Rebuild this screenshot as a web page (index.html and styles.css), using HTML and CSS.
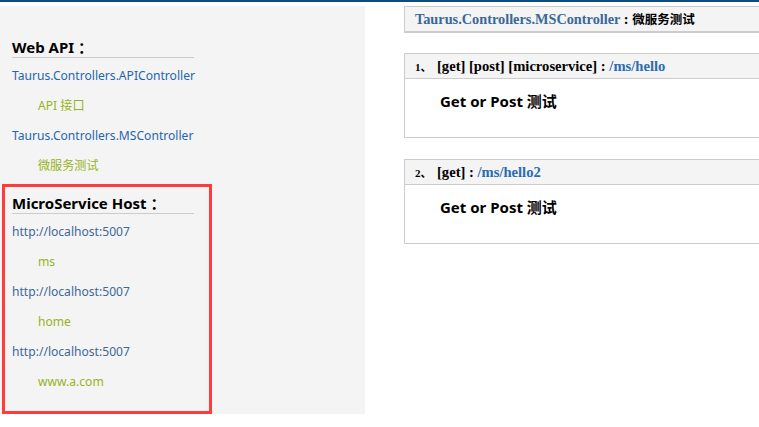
FILE: index.html
```html
<!DOCTYPE html>
<html lang="zh">
<head>
<meta charset="utf-8">
<title>Taurus MicroService</title>
<link rel="stylesheet" href="styles.css">
</head>
<body>
<div class="topbar"></div>
<div class="page">
  <aside class="sidebar">
    <section class="group">
      <h3 class="group-title">Web API ：</h3>
      <div class="row"><a class="link">Taurus.Controllers.APIController</a></div>
      <div class="row sub">API 接口</div>
      <div class="row"><a class="link">Taurus.Controllers.MSController</a></div>
      <div class="row sub">微服务测试</div>
    </section>
    <section class="group group-host">
      <h3 class="group-title">MicroService Host ：</h3>
      <div class="row"><a class="link host">http://localhost:5007</a></div>
      <div class="row sub">ms</div>
      <div class="row"><a class="link host">http://localhost:5007</a></div>
      <div class="row sub">home</div>
      <div class="row"><a class="link host">http://localhost:5007</a></div>
      <div class="row sub">www.a.com</div>
    </section>
  </aside>
  <main class="content">
    <div class="ctrl-head"><span class="ctrl-name">Taurus.Controllers.MSController</span> : <span class="cjk">微服务测试</span></div>
    <div class="api">
      <div class="api-head"><span class="num">1、</span>[get] [post] [microservice] : <span class="path">/ms/hello</span></div>
      <div class="api-body">Get or Post 测试</div>
    </div>
    <div class="api">
      <div class="api-head"><span class="num">2、</span>[get] : <span class="path">/ms/hello2</span></div>
      <div class="api-body">Get or Post 测试</div>
    </div>
  </main>
</div>
</body>
</html>
```
FILE: styles.css
```css
html, body {
  margin: 0;
  padding: 0;
  background: #ffffff;
  overflow: hidden;
}
body {
  width: 759px;
  height: 427px;
  font-family: "Noto Sans", "Noto Sans CJK SC", sans-serif;
}
.topbar {
  height: 2px;
  background: #0e4c7c;
}
.page {
  display: flex;
  align-items: flex-start;
  padding-top: 4px;
}
.sidebar {
  width: 365px;
  height: 408px;
  flex-shrink: 0;
  background: #f4f4f4;
  padding: 31px 0 0 2px;
  box-sizing: border-box;
}
.group {
  padding-left: 10px;
  width: 182px;
}
.group-title {
  margin: 0;
  width: 182px;
  height: 20px;
  line-height: 20px;
  font-size: 15px;
  font-weight: bold;
  color: #000;
  border-bottom: 1px solid #cccccc;
  margin-bottom: 3px;
  white-space: nowrap;
}
.row {
  height: 30px;
  line-height: 30px;
  font-size: 12.1px;
  white-space: nowrap;
}
.link {
  color: #1f66ad;
}
.link.host {
  color: #3d6897;
}
.sub {
  padding-left: 26px;
  color: #98b322;
}
.group-host {
  margin-top: 3px;
  width: 210px;
  height: 230px;
  box-sizing: border-box;
  border: 3px solid #ff3b3b;
  padding: 6px 0 0 7px;
}
.content {
  margin-left: 39px;
  flex: 1;
  min-width: 0;
  font-family: "Liberation Serif", "Noto Sans CJK SC", serif;
}
.ctrl-head {
  height: 24px;
  line-height: 24px;
  background: #f4f4f4;
  border: 1px solid #cccccc;
  border-right: 0;
  border-bottom: 2px solid #cccccc;
  padding-left: 10px;
  font-size: 14.3px;
  font-weight: bold;
  color: #000;
  white-space: nowrap;
}
.ctrl-name {
  color: #3a6898;
}
.cjk {
  font-size: 12.5px;
}
.api {
  margin-top: 20px;
  height: 85px;
  box-sizing: border-box;
  border: 1px solid #cccccc;
  border-right: 0;
}
.api + .api {
  margin-top: 21px;
}
.api-head {
  height: 24px;
  line-height: 24px;
  background: #f4f4f4;
  border-bottom: 1px solid #cccccc;
  padding-left: 10px;
  font-size: 14.6px;
  font-weight: bold;
  color: #000;
  white-space: nowrap;
}
.num {
  display: inline-block;
  width: 22px;
  font-size: 11px;
}
.path {
  color: #2a6cb0;
}
.api-body {
  padding: 12px 0 0 35px;
  line-height: 20px;
  font-family: "Noto Sans", "Noto Sans CJK SC", sans-serif;
  font-size: 15px;
  font-weight: bold;
  color: #000;
}
```
